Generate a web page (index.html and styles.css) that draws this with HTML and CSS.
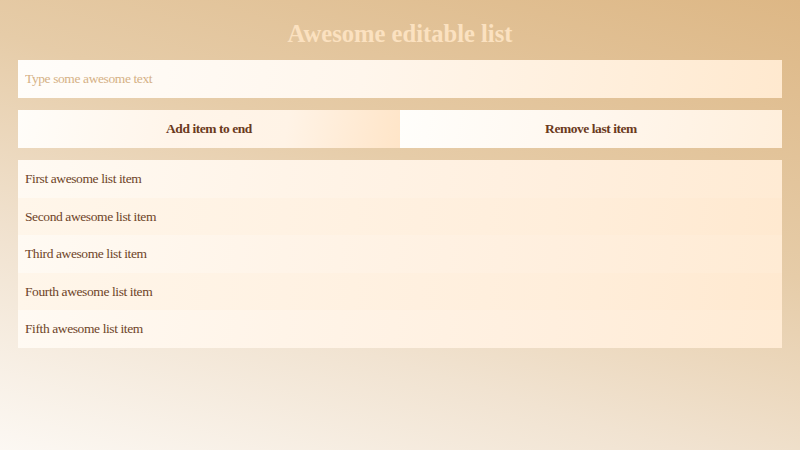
FILE: index.html
```html
<!DOCTYPE html>
<html lang="en">
<head>
<meta charset="utf-8">
<title>Awesome editable list</title>
<link rel="stylesheet" href="styles.css">
</head>
<body>
<main class="app">
  <h1 class="title">Awesome editable list</h1>
  <input class="field" type="text" placeholder="Type some awesome text">
  <div class="actions">
    <button class="btn btn-add">Add item to end</button>
    <button class="btn btn-remove">Remove last item</button>
  </div>
  <ul class="list">
    <li class="item">First awesome list item</li>
    <li class="item">Second awesome list item</li>
    <li class="item">Third awesome list item</li>
    <li class="item">Fourth awesome list item</li>
    <li class="item">Fifth awesome list item</li>
  </ul>
</main>
</body>
</html>
```
FILE: styles.css
```css
html, body {
  margin: 0;
  height: 100%;
}
body {
  font-family: "Liberation Serif", "Times New Roman", serif;
  font-size: 13.5px;
  letter-spacing: -0.4px;
  color: #6b3d1f;
  background: linear-gradient(17deg, #fcf8f3 0%, #f1e3d1 30%, #e6cca8 60%, #ddb785 100%);
  background-attachment: fixed;
}
.app {
  display: flex;
  flex-direction: column;
  padding: 20px 18px 0;
}
.title {
  margin: 0 0 12px;
  font-size: 24.6px;
  line-height: 28px;
  letter-spacing: 0;
  font-weight: bold;
  text-align: center;
  color: #fbe1c0;
}
.field {
  box-sizing: border-box;
  height: 38px;
  margin: 0 0 12px;
  padding: 0 7px;
  border: 0;
  outline: none;
  font-family: inherit;
  font-size: 13.5px;
  letter-spacing: -0.4px;
  color: #6b3d1f;
  background: linear-gradient(97deg, #fffdfa 0%, #fff6ec 45%, #ffeeda 80%, #ffe9cf 100%);
}
.field::placeholder {
  color: #d5b185;
}
.actions {
  display: flex;
  margin: 0 0 12px;
}
.btn {
  flex: 1;
  height: 38px;
  border: 0;
  padding: 0;
  font-family: inherit;
  font-size: 13.5px;
  letter-spacing: -0.45px;
  font-weight: bold;
  color: #6b3a1c;
  cursor: pointer;
}
.btn-add {
  background: linear-gradient(100deg, #fffdf9 0%, #fff5ea 40%, #fff3e6 70%, #ffe5c8 100%);
}
.btn-remove {
  background: linear-gradient(100deg, #fffefb 0%, #fff7ee 50%, #ffefdc 100%);
}
.list {
  display: flex;
  flex-direction: column;
  margin: 0;
  padding: 0;
  list-style: none;
}
.item {
  box-sizing: border-box;
  height: 37.5px;
  display: flex;
  align-items: center;
  padding: 1px 7px 0;
  color: #6e4428;
  background: linear-gradient(95deg, #fffaf3 0%, #fff4e8 35%, #ffefde 70%, #ffebd4 100%);
}
.item:nth-child(even) {
  background: linear-gradient(95deg, #fff6ea 0%, #fff2e3 35%, #ffeedb 70%, #ffe9d0 100%);
}
```
